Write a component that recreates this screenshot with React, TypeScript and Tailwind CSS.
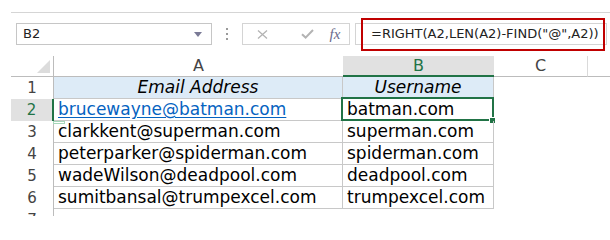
import React from "react";

const data: [string, string][] = [
  ["Email Address", "Username"],
  ["brucewayne@batman.com", "batman.com"],
  ["clarkkent@superman.com", "superman.com"],
  ["peterparker@spiderman.com", "spiderman.com"],
  ["wadeWilson@deadpool.com", "deadpool.com"],
  ["sumitbansal@trumpexcel.com", "trumpexcel.com"],
];

function RowHeader({ n }: { n: number }) {
  const active = n === 2;
  return (
    <div
      className={
        active
          ? "w-[43px] h-[22px] shrink-0 bg-[#e1e1e1] border-r-2 border-[#217346] text-[#217346] flex items-center justify-center text-[15px]"
          : "w-[43px] h-[22px] shrink-0 border-r border-[#bcbcbc] text-[#444] flex items-center justify-center text-[15px]"
      }
    >
      {n}
    </div>
  );
}

export default function App() {
  return (
    <div className="w-[610px] h-[216px] overflow-hidden bg-white text-black font-['DejaVu_Sans',sans-serif]">
      <div className="h-[12px]" />
      {/* formula bar */}
      <div className="ml-[11px] h-[44px] border-t border-[#d5d5d5] flex items-start pt-[10px]">
        <div className="ml-[5px] w-[196px] h-[22px] shrink-0 border border-[#c6c6c6] flex items-center pl-[6px] pr-[9px] text-[13px] text-[#222]">
          <span className="flex-1">B2</span>
          <svg width="8" height="5" viewBox="0 0 8 5">
            <path d="M0 0H8L4 5Z" fill="#7a7a96" />
          </svg>
        </div>
        <div className="w-[30px] h-[22px] shrink-0 flex flex-col items-center justify-center gap-[3px]">
          <div className="w-[2px] h-[2px] bg-[#9a9a9a]" />
          <div className="w-[2px] h-[2px] bg-[#9a9a9a]" />
          <div className="w-[2px] h-[2px] bg-[#9a9a9a]" />
        </div>
        <div className="w-[108px] h-[22px] shrink-0 border border-[#d4d4d4] flex items-center">
          <span className="w-[38px] flex justify-center">
            <svg width="11" height="9" viewBox="0 0 11 9">
              <path d="M1 0.5L10 8.5M10 0.5L1 8.5" stroke="#b3b3b3" strokeWidth="1.3" fill="none" />
            </svg>
          </span>
          <span className="ml-[6px] w-[40px] flex justify-center">
            <svg width="13" height="10" viewBox="0 0 13 10">
              <path d="M1 5.2L4.6 8.6L12 1" stroke="#b3b3b3" strokeWidth="2" fill="none" />
            </svg>
          </span>
          <span className="w-[16px] flex justify-center font-['Liberation_Serif',serif] italic text-[15px] text-[#6b6b8c] leading-none">
            fx
          </span>
        </div>
        <div className="ml-[5px] relative w-[252px] h-[22px] shrink-0 border border-[#d4d4d4] flex items-center pl-[15px] text-[13px] text-[#222] whitespace-nowrap">
          <div className="absolute left-[5px] top-[-6px] w-[244px] h-[33px] border-2 border-[#c00000]" />
          =RIGHT(A2,LEN(A2)-FIND("@",A2))
        </div>
      </div>
      {/* column headers */}
      <div className="ml-[11px] flex h-[21px]">
        <div className="w-[43px] shrink-0 border-r border-b border-[#bcbcbc] flex items-end justify-end pr-[3px] pb-[3px]">
          <svg width="13" height="13" viewBox="0 0 13 13">
            <path d="M13 0V13H0Z" fill="#dcdcdc" />
          </svg>
        </div>
        <div className="w-[289px] shrink-0 border-b border-[#bcbcbc] flex items-center justify-center text-[16px] text-[#444]">
          A
        </div>
        <div className="w-[151px] shrink-0 bg-[#e1e1e1] border-b-2 border-[#217346] flex items-center justify-center text-[16px] text-[#217346]">
          B
        </div>
        <div className="w-[94px] shrink-0 border-r border-b border-r-[#dadada] border-b-[#bcbcbc] flex items-center justify-center text-[16px] text-[#444]">
          C
        </div>
        <div className="flex-1 border-b border-[#bcbcbc]" />
      </div>
      {/* rows */}
      {data.map((row, i) => {
        const n = i + 1;
        const isHeader = n === 1;
        const isLink = n === 2;
        return (
          <div key={n} className="ml-[11px] flex h-[22px]">
            <RowHeader n={n} />
            <div
              className={
                "relative w-[289px] shrink-0 border-r border-b border-[#c8c8c8] flex items-center whitespace-nowrap overflow-visible text-[17px] " +
                (isHeader ? "bg-[#ddebf7] justify-center italic" : "pl-[4px]")
              }
            >
              {n === 3 && (
                <div className="absolute left-[-1px] top-0 w-[12px] h-[3px] border border-[#a7d8bb]" />
              )}
              {isLink ? (
                <span className="text-[#0563c1] underline underline-offset-2">{row[0]}</span>
              ) : (
                <span>{row[0]}</span>
              )}
            </div>
            <div
              className={
                "relative w-[151px] shrink-0 border-r border-b border-[#c8c8c8] flex items-center whitespace-nowrap text-[17px] " +
                (isHeader ? "bg-[#ddebf7] justify-center italic" : "pl-[4px]")
              }
            >
              {isLink && (
                <>
                  <div className="absolute left-[-2px] top-[-2px] right-[-1px] bottom-[-1px] border-2 border-[#217346]" />
                  <div className="absolute right-[-3px] bottom-[-4px] w-[7px] h-[7px] bg-[#217346] border border-white" />
                </>
              )}
              <span>{row[1]}</span>
            </div>
          </div>
        );
      })}
      <div className="ml-[11px] flex h-[22px]">
        <RowHeader n={7} />
      </div>
    </div>
  );
}
